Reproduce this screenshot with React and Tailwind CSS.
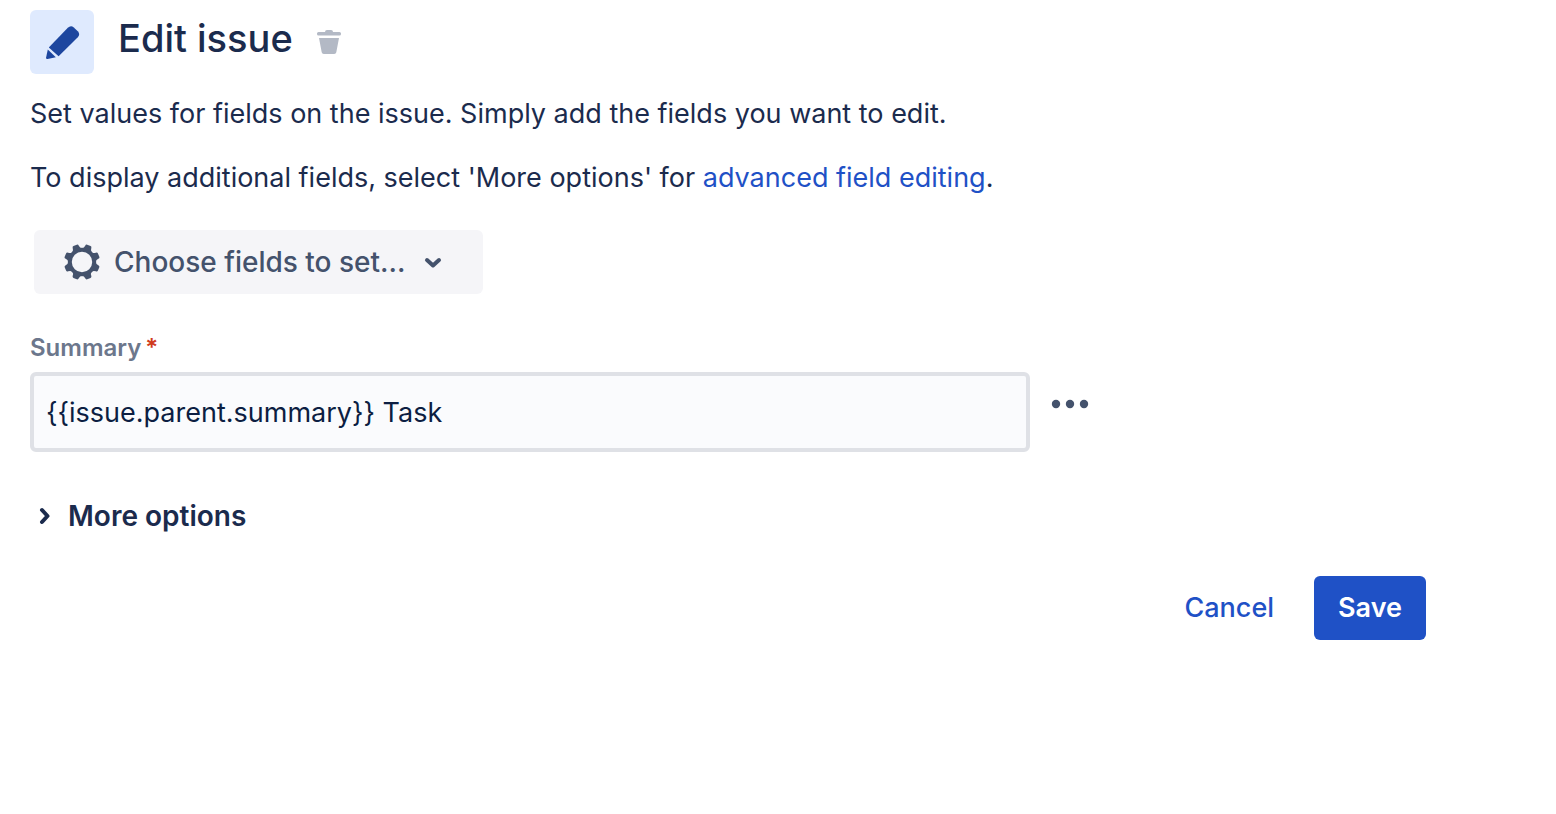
import { useState } from "react";

const TEETH = [22.5, 67.5, 112.5, 157.5, 202.5, 247.5, 292.5, 337.5];

function PencilIcon() {
  return (
    <svg viewBox="0 0 64 64" className="size-16" fill="#1d469f" aria-hidden="true">
      <path d="M18.800 37.400 37.800 17.800Q40.800 14.800 43.800 17.400L47.800 21.200Q50.600 24.200 47.800 27.200L28.600 46.200Z" />
      <path d="M17.800 39.600 25.800 47.300 17.600 48.900Q15.800 49.200 16.100 47.400Z" />
    </svg>
  );
}

function TrashIcon() {
  return (
    <svg viewBox="0 0 24 24" className="size-6" fill="#b3b9c5" aria-hidden="true">
      <path d="M8 2Q8 0 10 0h4q2 0 2 2h6.500q1.500 0 1.500 1.500v.5q0 1.500-1.500 1.500h-21Q0 5.500 0 4v-.5Q0 2 1.500 2Z" />
      <path d="M2 8h20l-2.700 14.200Q19 24 17.200 24H6.800Q5 24 4.700 22.200Z" />
    </svg>
  );
}

function GearIcon() {
  return (
    <svg viewBox="0 0 36 36" className="size-9" aria-hidden="true">
      <circle cx="18" cy="18" r="12.200" fill="none" stroke="#44526c" strokeWidth="4" />
      {TEETH.map((angle) => (
        <path
          key={angle}
          d="M12.800 5.500Q14.600 4 14.700 1.700Q14.800 0 16.200 0H19.800Q21.200 0 21.300 1.700Q21.400 4 23.200 5.500Z"
          fill="#44526c"
          transform={`rotate(${angle} 18 18)`}
        />
      ))}
    </svg>
  );
}

function Chevron({ className }) {
  return (
    <svg
      viewBox="0 0 20 20"
      className={className}
      fill="none"
      stroke="currentColor"
      strokeWidth="4"
      strokeLinecap="round"
      strokeLinejoin="round"
      aria-hidden="true"
    >
      <path d="M4 8 10 13.500 16 8" />
    </svg>
  );
}

export default function App() {
  const [summary, setSummary] = useState("{{issue.parent.summary}} Task");

  return (
    <main className="min-h-screen bg-white pt-2.5 pr-[130px] pl-[30px] font-['Inter',sans-serif] text-[27px] leading-10 text-[#1b2b4d]">
      <header className="flex">
        <div className="size-16 overflow-hidden rounded-md bg-[#dfeafe]">
          <PencilIcon />
        </div>
        <h1 className="ml-6 text-[38px] leading-14 font-medium">Edit issue</h1>
        <button type="button" aria-label="Delete" className="ml-6 flex h-16 items-center">
          <TrashIcon />
        </button>
      </header>

      <p className="mt-5">
        Set values for fields on the issue. Simply add the fields you want to edit.
      </p>
      <p className="mt-6">
        To display additional fields, select 'More options' for{" "}
        <a href="#advanced" className="text-[#1f51c6]">advanced field editing</a>.
      </p>

      <form onSubmit={(e) => e.preventDefault()}>
        <button
          type="button"
          className="mt-8 ml-1 flex h-16 items-center rounded-md bg-[#f5f5f8] pr-10 pl-[30px] text-[28px] font-medium text-[#44526c]"
        >
          <GearIcon />
          <span className="ml-3.5">Choose fields to set...</span>
          <Chevron className="ml-[18px] size-5" />
        </button>

        <label htmlFor="summary" className="mt-9 flex text-2xl leading-9 font-semibold text-[#6c778c]">
          Summary
          <span className="ml-1 text-[#d03b1b]">*</span>
        </label>
        <div className="mt-1.5 flex">
          <input
            id="summary"
            type="text"
            required
            value={summary}
            onChange={(e) => setSummary(e.target.value)}
            className="h-20 max-w-[1000px] min-w-0 flex-1 rounded-md border-4 border-[#dfe1e6] bg-[#fafbfd] px-3 text-[#0c1e42] outline-none"
          />
          <button type="button" aria-label="Field options" className="ml-5 flex h-16 items-center">
            <svg viewBox="0 0 40 10" className="h-2.5 w-10" fill="#44526c" aria-hidden="true">
              <circle cx="6" cy="5" r="4.200" />
              <circle cx="20" cy="5" r="4.200" />
              <circle cx="34" cy="5" r="4.200" />
            </svg>
          </button>
        </div>

        <button
          type="button"
          aria-expanded="false"
          className="mt-11 ml-1 flex items-center text-[28px] font-semibold"
        >
          <Chevron className="size-5 -rotate-90" />
          <span className="ml-3.5">More options</span>
        </button>

        <div className="mt-10 flex justify-end gap-4">
          <button type="button" className="h-16 rounded-md px-6 font-medium text-[#1f51c6]">
            Cancel
          </button>
          <button type="submit" className="h-16 rounded-md bg-[#1f51c6] px-6 font-semibold text-white">
            Save
          </button>
        </div>
      </form>
    </main>
  );
}
